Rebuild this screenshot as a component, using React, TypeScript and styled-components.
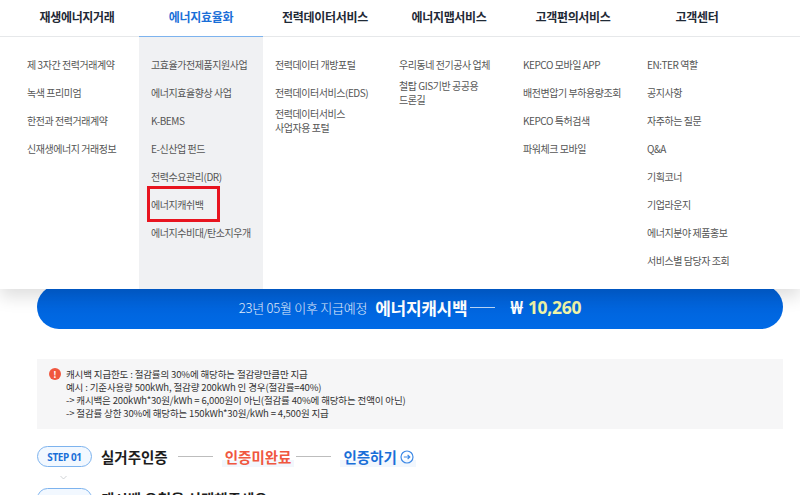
import React from 'react';
import styled, { createGlobalStyle } from 'styled-components';

const GlobalStyle = createGlobalStyle`
  html, body {
    margin: 0;
    padding: 0;
    background: #fff;
    overflow: hidden;
  }
  body {
    font-family: "Noto Sans CJK KR", "Noto Sans", sans-serif;
  }
`;

const Page = styled.div`
  position: relative;
  width: 800px;
  height: 495px;
  overflow: hidden;
`;

const Header = styled.header`
  position: absolute;
  top: 0;
  left: 0;
  right: 0;
  z-index: 10;
  background: #fff;
  box-shadow: 0 8px 16px rgba(0, 0, 0, 0.13);
`;

const NavBar = styled.nav`
  display: grid;
  grid-template-columns: repeat(6, 124px);
  padding-left: 15px;
  height: 36px;
  border-bottom: 1px solid #e6e8ea;
`;

const NavItem = styled.div<{ $active?: boolean }>`
  display: flex;
  align-items: center;
  justify-content: center;
  padding-bottom: 5px;
  font-size: 12px;
  font-weight: 700;
  letter-spacing: -0.3px;
  color: ${(p) => (p.$active ? '#1a6fd8' : '#1f2a36')};
  box-shadow: ${(p) => (p.$active ? 'inset 0 -1px 0 #7db3ee' : 'none')};
  margin-bottom: -1px;
`;

const Mega = styled.div`
  display: grid;
  grid-template-columns: repeat(6, 124px);
  padding-left: 15px;
  height: 252px;
`;

const Column = styled.ul<{ $active?: boolean }>`
  list-style: none;
  margin: 0;
  padding: 14px 0 0 12px;
  background: ${(p) => (p.$active ? '#f0f1f3' : 'transparent')};
`;

const MenuItem = styled.li`
  display: flex;
  align-items: center;
  min-height: 28px;
  font-size: 10px;
  line-height: 14px;
  letter-spacing: -0.45px;
  color: #555;
  white-space: pre;
`;

const Highlight = styled.div`
  position: absolute;
  left: 147px;
  top: 186px;
  width: 73px;
  height: 36px;
  border: 3px solid #e8141f;
  box-sizing: border-box;
  z-index: 11;
`;

const Content = styled.main`
  display: flex;
  flex-direction: column;
  padding: 285px 16px 0 37px;
`;

const Banner = styled.div`
  display: flex;
  align-items: center;
  justify-content: center;
  height: 44px;
  margin-right: 1px;
  border-radius: 22px;
  background: linear-gradient(#0060d6, #006ae6);
  color: #fff;
`;

const BannerLabel = styled.span`
  font-size: 13px;
  font-weight: 300;
  letter-spacing: -0.25px;
  color: #e3eefc;
  margin-right: 8px;
`;

const BannerTitle = styled.strong`
  font-size: 17px;
  font-weight: 700;
  letter-spacing: -0.3px;
`;

const BannerRule = styled.span`
  width: 25px;
  height: 1px;
  margin: 0 15px 0 3px;
  background: #b9d5f6;
`;

const BannerAmount = styled.strong`
  font-family: "Noto Sans", sans-serif;
  font-size: 17.5px;
  font-weight: 700;
  color: #f0f5a8;
  letter-spacing: -0.3px;
`;

const Won = styled.span`
  color: #fff;
  margin-right: 5px;
`;

const Notice = styled.div`
  display: flex;
  gap: 5px;
  margin-top: 30px;
  margin-right: 1px;
  height: 70px;
  box-sizing: border-box;
  padding: 9px 12px;
  background: #f6f6f7;
`;

const NoticeIcon = styled.span`
  flex: none;
  display: flex;
  align-items: center;
  justify-content: center;
  width: 12px;
  height: 12px;
  border-radius: 50%;
  background: #f0573f;
  color: #fff;
  font-size: 9px;
  font-weight: 700;
`;

const NoticeText = styled.div`
  font-size: 9.5px;
  line-height: 13px;
  letter-spacing: -0.14px;
  color: #333;
  white-space: nowrap;
`;

const StepRow = styled.div`
  display: flex;
  align-items: center;
  height: 21px;
  margin-top: 17px;
`;

const StepBadge = styled.span`
  flex: none;
  display: flex;
  align-items: center;
  justify-content: center;
  width: 55px;
  height: 21px;
  box-sizing: border-box;
  border: 1px solid #7db3ee;
  border-radius: 11px;
  background: #f2f8ff;
  color: #1a6fd8;
  font-family: "Noto Sans", sans-serif;
  font-size: 10px;
  font-weight: 700;
  letter-spacing: -0.4px;
`;

const StepTitle = styled.span`
  margin-left: 9px;
  font-size: 14.5px;
  font-weight: 700;
  color: #1c1c1c;
  white-space: nowrap;
`;

const StepRule = styled.span<{ $gap: number }>`
  width: 35px;
  height: 1px;
  background: #bdbdbd;
  margin-left: ${(p) => p.$gap}px;
`;

const StatusText = styled.span`
  margin-left: 9px;
  padding: 0 3px;
  font-size: 14.5px;
  font-weight: 700;
  color: #f0573f;
  background: linear-gradient(transparent 68%, #f2f7fd 68%);
`;

const ActionText = styled.span`
  display: flex;
  align-items: center;
  gap: 3px;
  margin-left: 9px;
  padding: 0 2px 0 3px;
  font-size: 14.5px;
  font-weight: 700;
  color: #1a6fd8;
  background: linear-gradient(transparent 68%, #f2f7fd 68%);
`;

const Chevron = styled.svg`
  display: block;
  width: 7px;
  height: 5px;
  margin: 8px 0 0 23px;
`;

const SecondRow = styled(StepRow)`
  margin-top: 8px;
`;

const columns: { items: string[]; active?: boolean }[] = [
  { items: ['제 3자간 전력거래계약', '녹색 프리미엄', '한전과 전력거래계약', '신재생에너지 거래정보'] },
  {
    active: true,
    items: ['고효율가전제품지원사업', '에너지효율향상 사업', 'K-BEMS', 'E-신산업 펀드', '전력수요관리(DR)', '에너지캐쉬백', '에너지수비대/탄소지우개'],
  },
  { items: ['전력데이터 개방포털', '전력데이터서비스(EDS)', '전력데이터서비스\n사업자용 포털'] },
  { items: ['우리동네 전기공사 업체', '철탑 GIS기반 공공용\n드론길'] },
  { items: ['KEPCO 모바일 APP', '배전변압기 부하용량조회', 'KEPCO 특허검색', '파워체크 모바일'] },
  { items: ['EN:TER 역할', '공지사항', '자주하는 질문', 'Q&A', '기획코너', '기업라운지', '에너지분야 제품홍보', '서비스별 담당자 조회'] },
];

const navLabels = ['재생에너지거래', '에너지효율화', '전력데이터서비스', '에너지맵서비스', '고객편의서비스', '고객센터'];

const App = () => {
  return (
    <Page>
      <GlobalStyle />
      <Header>
        <NavBar>
          {navLabels.map((label, i) => (
            <NavItem key={label} $active={i === 1}>
              {label}
            </NavItem>
          ))}
        </NavBar>
        <Mega>
          {columns.map((col, i) => (
            <Column key={i} $active={col.active}>
              {col.items.map((item) => (
                <MenuItem key={item}>{item}</MenuItem>
              ))}
            </Column>
          ))}
        </Mega>
        <Highlight />
      </Header>
      <Content>
        <Banner>
          <BannerLabel>23년 05월 이후 지급예정</BannerLabel>
          <BannerTitle>에너지캐시백</BannerTitle>
          <BannerRule />
          <BannerAmount>
            <Won>₩</Won>10,260
          </BannerAmount>
        </Banner>
        <Notice>
          <NoticeIcon>!</NoticeIcon>
          <NoticeText>
            캐시백 지급한도 : 절감률의 30%에 해당하는 절감량만큼만 지급
            <br />
            예시 : 기준사용량 500kWh, 절감량 200kWh 인 경우(절감률=40%)
            <br />
            {'-> 캐시백은 200kWh*30원/kWh = 6,000원이 아닌(절감률 40%에 해당하는 전액이 아닌)'}
            <br />
            {'-> 절감률 상한 30%에 해당하는 150kWh*30원/kWh = 4,500원 지급'}
          </NoticeText>
        </Notice>
        <StepRow>
          <StepBadge>STEP 01</StepBadge>
          <StepTitle>실거주인증</StepTitle>
          <StepRule $gap={10} />
          <StatusText>인증미완료</StatusText>
          <StepRule $gap={2} />
          <ActionText>
            인증하기
            <svg width="14" height="14" viewBox="0 0 14 14" fill="none" stroke="#3f8ae6" strokeWidth="1.2">
              <circle cx="7" cy="7" r="6" />
              <path d="M3.8 7h6M7.6 4.8 9.8 7 7.6 9.2" />
            </svg>
          </ActionText>
        </StepRow>
        <Chevron viewBox="0 0 7 5" fill="none" stroke="#c4c8cc" strokeWidth="0.8">
          <path d="M0.5 1 3.5 4 6.5 1" />
        </Chevron>
        <SecondRow>
          <StepBadge>STEP 02</StepBadge>
          <StepTitle>캐시백 요청을 선택해주세요</StepTitle>
        </SecondRow>
      </Content>
    </Page>
  );
};

export default App;
